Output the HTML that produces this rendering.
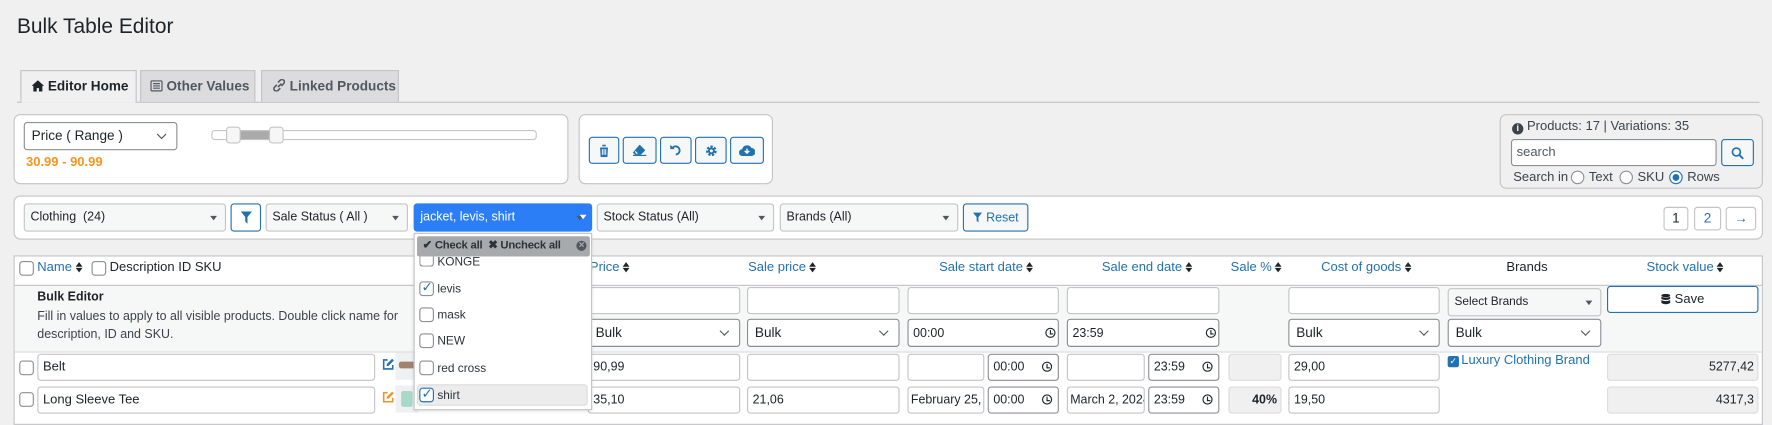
<!DOCTYPE html>
<html><head><meta charset="utf-8"><style>
*{box-sizing:border-box;margin:0;padding:0}
html,body{width:1772px;height:417px;overflow:hidden;background:#f0f0f1}
#w{position:absolute;left:0;top:0;width:1568px;height:369px;transform:scale(1.1301);transform-origin:0 0;font-family:"Liberation Sans",sans-serif;color:#1d2327;font-size:11.5px}
.a{position:absolute}
.panel{position:absolute;background:#fff;border:1px solid #c3c4c7;border-radius:6px}
.in{position:absolute;background:#fff;border:1px solid #c3c4c7;border-radius:3px;height:24px;padding-left:4px;font-size:11px;white-space:nowrap;overflow:hidden;display:flex;align-items:center}
.sel{position:absolute;background:#f6f7f7;border:1px solid #c3c4c7;border-radius:3px;height:25px;padding-left:5px;line-height:23px;font-size:11px;white-space:nowrap}
.sel:after{content:"";position:absolute;right:7px;top:10px;border-left:3.5px solid transparent;border-right:3.5px solid transparent;border-top:4px solid #50575e}
.bs{position:absolute;background:#fff;border:1px solid #8c8f94;border-radius:3px;height:25px;padding-left:6px;line-height:23px;font-size:12px}
.bs:after{content:"";position:absolute;right:10px;top:7px;width:5px;height:5px;border-right:1.3px solid #50575e;border-bottom:1.3px solid #50575e;transform:rotate(45deg)}
.btn{position:absolute;background:#f6f7f7;border:1px solid #2271b1;border-radius:3px;color:#2271b1;display:flex;align-items:center;justify-content:center}
.cb{position:absolute;width:13px;height:13px;border:1px solid #8c8f94;border-radius:3px;background:#fff}
.blue{color:#2271b1}
.sort{display:inline-block;width:6px;height:9px;position:relative;vertical-align:-1px;margin-left:3px}
.sort:before{content:"";position:absolute;left:0;top:0;border-left:3px solid transparent;border-right:3px solid transparent;border-bottom:4px solid #1d2327}
.sort:after{content:"";position:absolute;left:0;top:5px;border-left:3px solid transparent;border-right:3px solid transparent;border-top:4px solid #1d2327}
.clock{position:absolute;width:9px;height:9px;border:1.3px solid #1d2327;border-radius:50%}
.clock:after{content:"";position:absolute;left:3px;top:1px;width:2px;height:3px;border-left:1.2px solid #1d2327;border-bottom:1.2px solid #1d2327}
.ro{position:absolute;background:#f0f0f1;border:1px solid #dcdcde;border-radius:3px;height:24px;font-size:11px;line-height:22px;text-align:right;padding-right:3px}
.rad{position:absolute;width:12px;height:12px;border:1px solid #8c8f94;border-radius:50%;background:#fff}
.dd{font-size:10.5px;color:#2c3338}
</style></head><body><div id="w">
<div class="a" style="left:15px;top:12px;font-size:18.5px">Bulk Table Editor</div>
<!-- tabs -->
<div class="a" style="left:15px;top:90px;width:1542px;height:1px;background:#c3c4c7"></div>
<div class="a" style="left:18px;top:62px;width:103px;height:29px;background:#f0f0f1;border:1px solid #c3c4c7;border-bottom:none;font-weight:bold;font-size:12px;line-height:27px;padding-left:9px"><svg width="11" height="10" viewBox="0 0 11 10" style="vertical-align:-1px"><path d="M5.5 0L0 5h1.5v5h3V7h2v3h3V5H11z" fill="#1d2327"/></svg> Editor Home</div>
<div class="a" style="left:124px;top:62px;width:102px;height:28px;background:#dcdcde;border:1px solid #c3c4c7;border-bottom:none;font-weight:bold;font-size:12px;line-height:27px;padding-left:8px;color:#50575e"><svg width="11" height="10" viewBox="0 0 11 10" style="vertical-align:-1px"><rect x=".6" y=".6" width="9.8" height="8.8" rx="1" fill="none" stroke="#50575e" stroke-width="1.1"/><path d="M2.5 3h6M2.5 5h6M2.5 7h6" stroke="#50575e"/></svg> Other Values</div>
<div class="a" style="left:231px;top:62px;width:122px;height:28px;background:#dcdcde;border:1px solid #c3c4c7;border-bottom:none;font-weight:bold;font-size:12px;line-height:27px;padding-left:9px;color:#50575e"><svg width="12" height="11" viewBox="0 0 12 11" style="vertical-align:-1px"><path d="M5 7L8 4M4 5L2 7a2 2 0 003 3l2-2M8 6l2-2a2 2 0 00-3-3L5 3" fill="none" stroke="#50575e" stroke-width="1.4"/></svg> Linked Products</div>
<!-- panel1 -->
<div class="panel" style="left:12px;top:101px;width:491px;height:62px"></div>
<div class="bs" style="left:21px;top:108px;width:136px;font-size:12px">Price ( Range )</div>
<div class="a" style="left:187px;top:115px;width:288px;height:9px;border:1px solid #c5c5c5;border-radius:3px;background:#fff"></div>
<div class="a" style="left:208px;top:116px;width:36px;height:7px;background:#aaa"></div>
<div class="a" style="left:200px;top:112px;width:13px;height:15px;border:1px solid #c5c5c5;border-radius:3px;background:#f6f6f6"></div>
<div class="a" style="left:238px;top:112px;width:13px;height:15px;border:1px solid #c5c5c5;border-radius:3px;background:#f6f6f6"></div>
<div class="a" style="left:23px;top:138px;font-weight:bold;font-size:11.5px;color:#f7941d">30.99 - 90.99</div>
<!-- panel2 -->
<div class="panel" style="left:512px;top:101px;width:172px;height:62px"></div>
<div class="btn" style="left:521px;top:121px;width:27px;height:24px"><svg width="9" height="11" viewBox="0 0 9 11"><path d="M0 1.5h9M3 1.5V0h3v1.5M1 2.5h7l-.5 8.5h-6z" fill="#2271b1"/><path d="M3 4v5M4.5 4v5M6 4v5" stroke="#fff" stroke-width=".8"/></svg></div>
<div class="btn" style="left:551px;top:121px;width:30px;height:24px"><svg width="12" height="10" viewBox="0 0 12 10"><path d="M6 0l5 5-4 4H2L0 7z" fill="#2271b1"/><path d="M2 6l2 2" stroke="#fff"/><path d="M0 9.5h12" stroke="#2271b1"/></svg></div>
<div class="btn" style="left:584px;top:121px;width:28px;height:24px"><svg width="10" height="10" viewBox="0 0 10 10"><path d="M2.3 2.5A3.6 3.6 0 115 8.7" fill="none" stroke="#2271b1" stroke-width="1.6"/><path d="M0 0v4h4z" fill="#2271b1"/></svg></div>
<div class="btn" style="left:615px;top:121px;width:28px;height:24px"><svg width="11" height="11" viewBox="0 0 11 11"><circle cx="5.5" cy="5.5" r="3.6" fill="none" stroke="#2271b1" stroke-width="2.2" stroke-dasharray="2 1.2"/><circle cx="5.5" cy="5.5" r="3" fill="#2271b1"/><circle cx="5.5" cy="5.5" r="1.3" fill="#fff"/></svg></div>
<div class="btn" style="left:646px;top:121px;width:30px;height:24px"><svg width="14" height="10" viewBox="0 0 14 10"><path d="M3 10a3 3 0 01-.3-6A4.5 4.5 0 0111 3a3.5 3.5 0 010 7z" fill="#2271b1"/><path d="M7 3.5v4M5 5.5l2 2 2-2" stroke="#fff" stroke-width="1.2" fill="none"/></svg></div>
<!-- search panel -->
<div class="panel" style="left:1327px;top:101px;width:233px;height:66px;background:#f0f0f1"></div>
<div class="a" style="left:1338px;top:106px;font-size:11.5px;color:#3c434a"><span style="display:inline-block;width:10px;height:10px;border-radius:50%;background:#3c434a;color:#fff;font-size:8px;line-height:10px;text-align:center;font-weight:bold;vertical-align:-1px">i</span> Products: 17 | Variations: 35</div>
<div class="in" style="left:1337px;top:123px;width:182px;height:24px;border-color:#8c8f94;font-size:11.5px;color:#50575e">search</div>
<div class="btn" style="left:1523px;top:123px;width:29px;height:24px"><svg width="11" height="11" viewBox="0 0 11 11"><circle cx="4.5" cy="4.5" r="3.5" fill="none" stroke="#2271b1" stroke-width="1.5"/><path d="M7 7l3.5 3.5" stroke="#2271b1" stroke-width="1.7"/></svg></div>
<div class="a" style="left:1339px;top:151px;font-size:11.5px;color:#3c434a">Search in</div>
<div class="rad" style="left:1390px;top:151px"></div><div class="a" style="left:1406px;top:151px;font-size:11.5px;color:#3c434a">Text</div>
<div class="rad" style="left:1433px;top:151px"></div><div class="a" style="left:1449px;top:151px;font-size:11.5px;color:#3c434a">SKU</div>
<div class="rad" style="left:1477px;top:151px;border-color:#2271b1"><div class="a" style="left:2px;top:2px;width:6px;height:6px;border-radius:50%;background:#2271b1"></div></div><div class="a" style="left:1493px;top:151px;font-size:11.5px;color:#3c434a">Rows</div>
<!-- filter panel -->
<div class="panel" style="left:12px;top:173px;width:1548px;height:39px"></div>
<div class="sel" style="left:21px;top:180px;width:179px">Clothing&nbsp; (24)</div>
<div class="btn" style="left:204px;top:180px;width:27px;height:25px;background:#fff"><svg width="10" height="11" viewBox="0 0 10 11"><path d="M0 0h10L6 5v6L4 9V5z" fill="#2271b1"/></svg></div>
<div class="sel" style="left:235px;top:180px;width:126px">Sale Status ( All )</div>
<div class="sel" style="left:366px;top:180px;width:158px;background:#2b7ef5;border-color:#2b7ef5;color:#fff">jacket, levis, shirt</div>
<div class="a" style="left:513px;top:190px;border-left:3.5px solid transparent;border-right:3.5px solid transparent;border-top:4px solid #fff"></div>
<div class="sel" style="left:528px;top:180px;width:157px">Stock Status (All)</div>
<div class="sel" style="left:690px;top:180px;width:158px">Brands (All)</div>
<div class="btn" style="left:852px;top:180px;width:58px;height:25px;font-size:11px"><svg width="8" height="9" viewBox="0 0 10 11" style="margin-right:4px"><path d="M0 0h10L6 5v6L4 9V5z" fill="#2271b1"/></svg>Reset</div>
<div class="a" style="left:1472px;top:183px;width:22px;height:21px;border:1px solid #c3c4c7;border-radius:3px;background:#fff;text-align:center;line-height:19px;font-size:12px">1</div>
<div class="a" style="left:1499px;top:183px;width:24px;height:21px;border:1px solid #c3c4c7;border-radius:3px;background:#fff;text-align:center;line-height:19px;font-size:12px;color:#2271b1">2</div>
<div class="a" style="left:1527px;top:183px;width:27px;height:21px;border:1px solid #c3c4c7;border-radius:3px;background:#fff;text-align:center;line-height:19px;font-size:12px;color:#2271b1">→</div>
<!-- table -->
<div class="a" style="left:12px;top:226px;width:1548px;height:150px;background:#fff;border:1px solid #c3c4c7"></div>
<div class="a" style="left:13px;top:252px;width:1546px;height:60px;background:#f6f7f7;border-top:1px solid #c3c4c7;border-bottom:1px solid #dcdcde"></div>
<div class="cb" style="left:17px;top:231px"></div>
<div class="a blue" style="left:33px;top:231px">Name<span class="sort"></span></div>
<div class="cb" style="left:81px;top:231px"></div>
<div class="a" style="left:97px;top:231px">Description ID SKU</div>
<div class="a blue" style="left:522px;top:231px">Price<span class="sort"></span></div>
<div class="a blue" style="left:662px;top:231px">Sale price<span class="sort"></span></div>
<div class="a blue" style="left:831px;top:231px">Sale start date<span class="sort"></span></div>
<div class="a blue" style="left:975px;top:231px">Sale end date<span class="sort"></span></div>
<div class="a blue" style="left:1089px;top:231px">Sale %<span class="sort"></span></div>
<div class="a blue" style="left:1169px;top:231px">Cost of goods<span class="sort"></span></div>
<div class="a" style="left:1333px;top:231px">Brands</div>
<div class="a blue" style="left:1457px;top:231px">Stock value<span class="sort"></span></div>
<div class="a" style="left:33px;top:257px;font-weight:bold;font-size:11px">Bulk Editor</div>
<div class="a" style="left:33px;top:272px;font-size:11px;line-height:16px;width:330px;color:#3c434a">Fill in values to apply to all visible products. Double click name for description, ID and SKU.</div>
<div class="in" style="left:520px;top:254px;width:135px"></div>
<div class="in" style="left:661px;top:254px;width:135px"></div>
<div class="in" style="left:803px;top:254px;width:134px"></div>
<div class="in" style="left:944px;top:254px;width:135px"></div>
<div class="in" style="left:1140px;top:254px;width:134px"></div>
<div class="sel" style="left:1281px;top:255px;width:136px;font-size:10.5px">Select Brands</div>
<div class="btn" style="left:1422px;top:253px;width:134px;height:24px;background:#fff;color:#1d2327;font-size:11.5px"><svg width="8" height="10" viewBox="0 0 8 10" style="margin-right:4px"><ellipse cx="4" cy="1.5" rx="4" ry="1.5" fill="#1d2327"/><path d="M0 2.5q4 2 8 0v2q-4 2-8 0zM0 5.5q4 2 8 0v2.5q-4 2.5-8 0z" fill="#1d2327"/></svg>Save</div>
<div class="bs" style="left:520px;top:282px;width:135px">Bulk</div>
<div class="bs" style="left:661px;top:282px;width:135px">Bulk</div>
<div class="in" style="left:803px;top:282px;width:134px;height:25px;border-color:#8c8f94">00:00<div class="clock" style="left:121px;top:7px"></div></div>
<div class="in" style="left:944px;top:282px;width:135px;height:25px;border-color:#8c8f94">23:59<div class="clock" style="left:122px;top:7px"></div></div>
<div class="bs" style="left:1140px;top:282px;width:134px">Bulk</div>
<div class="bs" style="left:1281px;top:282px;width:136px">Bulk</div>
<!-- row Belt -->
<div class="cb" style="left:17px;top:319px"></div>
<div class="in" style="left:33px;top:313px;width:299px;font-size:11.5px">Belt</div>
<svg class="a" style="left:338px;top:317px" width="11" height="11" viewBox="0 0 11 11"><path d="M5 1.5H1.5v8h8V6" fill="none" stroke="#2271b1" stroke-width="1.4"/><path d="M4 7l.4-2L9 .5l1.5 1.5L6 6.6z" fill="#2271b1"/></svg>
<div class="a" style="left:350px;top:312px;width:20px;height:24px;background:#eef0f2"><div class="a" style="left:3px;top:8px;width:14px;height:6px;background:#a0826d;border-radius:2px"></div></div>
<div class="in" style="left:520px;top:313px;width:135px">90,99</div>
<div class="in" style="left:661px;top:313px;width:135px"></div>
<div class="in" style="left:803px;top:313px;width:68px"></div>
<div class="in" style="left:874px;top:313px;width:63px;border-color:#8c8f94">00:00<div class="clock" style="left:47px;top:6px"></div></div>
<div class="in" style="left:944px;top:313px;width:69px"></div>
<div class="in" style="left:1016px;top:313px;width:63px;border-color:#8c8f94">23:59<div class="clock" style="left:47px;top:6px"></div></div>
<div class="ro" style="left:1087px;top:313px;width:47px"></div>
<div class="in" style="left:1140px;top:313px;width:134px">29,00</div>
<div class="a" style="left:1281px;top:315px;width:10px;height:10px;background:#2271b1;border-radius:2px;color:#fff;font-size:8px;line-height:10px;text-align:center">✓</div>
<div class="a blue" style="left:1293px;top:313px;font-size:11.5px">Luxury Clothing Brand</div>
<div class="ro" style="left:1422px;top:313px;width:134px">5277,42</div>
<!-- row Long Sleeve -->
<div class="cb" style="left:17px;top:347px"></div>
<div class="in" style="left:33px;top:342px;width:299px;font-size:11.5px">Long Sleeve Tee</div>
<svg class="a" style="left:338px;top:346px" width="11" height="11" viewBox="0 0 11 11"><path d="M5 1.5H1.5v8h8V6" fill="none" stroke="#f0932b" stroke-width="1.4"/><path d="M4 7l.4-2L9 .5l1.5 1.5L6 6.6z" fill="#f0932b"/></svg>
<div class="a" style="left:350px;top:341px;width:20px;height:24px;background:#eef0f2"><div class="a" style="left:5px;top:5px;width:10px;height:14px;background:#a8d8c8;border-radius:2px"></div></div>
<div class="in" style="left:520px;top:342px;width:135px">35,10</div>
<div class="in" style="left:661px;top:342px;width:135px">21,06</div>
<div class="in" style="left:803px;top:342px;width:68px;padding-left:2px">February 25, 2</div>
<div class="in" style="left:874px;top:342px;width:63px;border-color:#8c8f94">00:00<div class="clock" style="left:47px;top:6px"></div></div>
<div class="in" style="left:944px;top:342px;width:69px;padding-left:2px">March 2, 2024</div>
<div class="in" style="left:1016px;top:342px;width:63px;border-color:#8c8f94">23:59<div class="clock" style="left:47px;top:6px"></div></div>
<div class="ro" style="left:1087px;top:342px;width:47px;font-weight:bold">40%</div>
<div class="in" style="left:1140px;top:342px;width:134px">19,50</div>
<div class="ro" style="left:1422px;top:342px;width:134px">4317,3</div>
<!-- dropdown -->
<div class="a" style="left:366px;top:206px;width:158px;height:157px;background:#fff;border:1px solid #c3c4c7;box-shadow:0 1px 3px rgba(0,0,0,.15);overflow:hidden">
 <div class="a dd" style="left:2px;top:2px;width:153px;height:18px;background:#a7aaad;border-radius:2px;font-weight:bold;line-height:18px;padding-left:5px;font-size:10px;letter-spacing:-.2px">✔ Check all&nbsp;&nbsp;✖ Uncheck all<span style="position:absolute;right:3px;top:4px;width:9px;height:9px;border-radius:50%;background:#50575e;color:#a7aaad;font-size:7px;line-height:9px;text-align:center">✕</span></div>
 <div class="cb" style="left:4px;top:20px;width:13px;height:9px;border-top:none;border-radius:0 0 3px 3px"></div><div class="a dd" style="left:20px;top:19px">KONGE</div>
 <div class="cb" style="left:4px;top:42px"></div><div class="a" style="left:6px;top:40px;color:#2271b1;font-size:12px">✓</div><div class="a dd" style="left:20px;top:43px">levis</div>
 <div class="cb" style="left:4px;top:65px"></div><div class="a dd" style="left:20px;top:66px">mask</div>
 <div class="cb" style="left:4px;top:88px"></div><div class="a dd" style="left:20px;top:89px">NEW</div>
 <div class="a" style="left:2px;top:133px;width:151px;height:19px;background:#ececec;border:1px solid #dcdcde;border-radius:3px"></div>
 <div class="cb" style="left:4px;top:112px"></div><div class="a dd" style="left:20px;top:113px">red cross</div>
 <div class="cb" style="left:4px;top:136px;border:1.5px solid #2271b1"></div><div class="a" style="left:6px;top:134px;color:#2271b1;font-size:12px">✓</div><div class="a dd" style="left:20px;top:137px">shirt</div>
</div>
</div></body></html>
